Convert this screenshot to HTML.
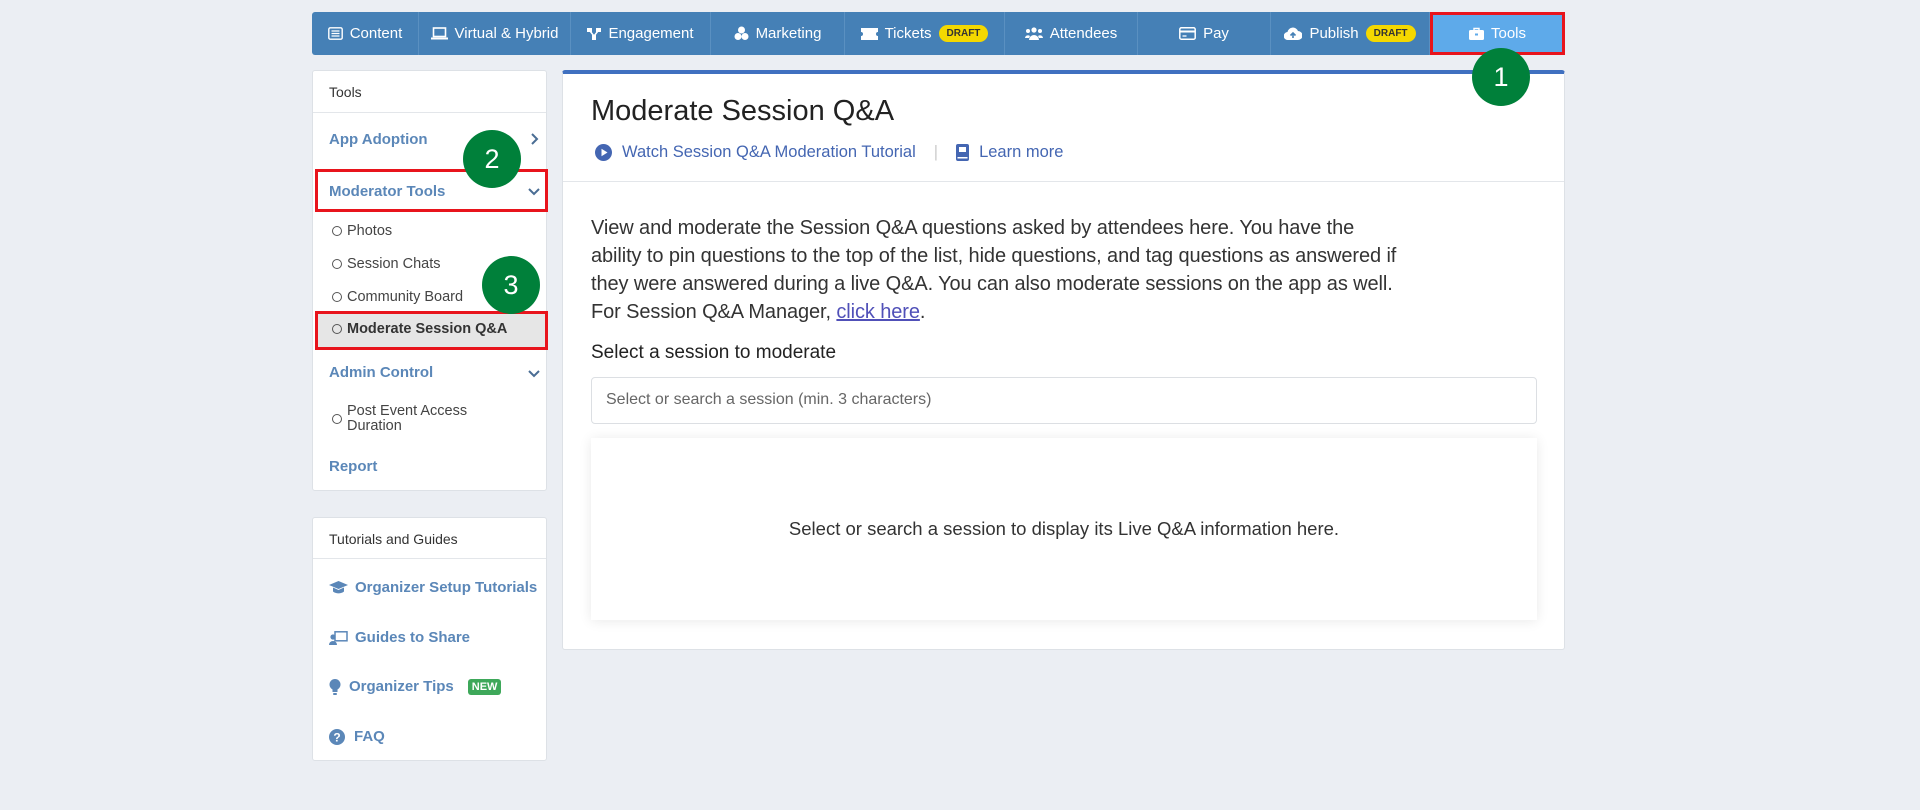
<!DOCTYPE html>
<html><head><meta charset="utf-8"><style>
*{box-sizing:border-box;margin:0;padding:0}
body{width:1920px;height:810px;background:#ebeef3;font-family:"Liberation Sans",Arial,sans-serif;position:relative;overflow:hidden;color:#333}
.abs{position:absolute}
.nav{left:312px;top:12px;width:1253px;height:43px;background:#4580b6;border-radius:3px;display:flex}
.nav div{height:43px;display:flex;align-items:center;justify-content:center;color:#fff;font-size:15px;border-right:1px solid #5a90c1;gap:7px}
.draft{background:#f4d800;color:#333;font-size:10px;font-weight:bold;padding:3px 8px;border-radius:9px}
.card{background:#fff;border:1px solid #dde1e6;border-radius:3px}
.sb{left:312px;width:235px}
.it{position:absolute;left:16px;font-size:15px;font-weight:bold;color:#5b87b8}
.sub{position:absolute;left:19px;font-size:14.5px;color:#444;display:flex;align-items:center;gap:5px}
.sub i{display:inline-block;width:10px;height:10px;border:1.3px solid #555;border-radius:50%}
.chev{position:absolute;right:5px}
.red{position:absolute;border:3px solid #e8141c}
.num{position:absolute;width:58px;height:58px;border-radius:50%;background:#00803a;color:#fff;font-size:27px;display:flex;align-items:center;justify-content:center}
.lnk{color:#4466b2;font-size:16.5px}
</style></head><body>
<div class="abs nav">
 <div style="width:107px"><svg width="15" height="13"><rect x=".8" y=".8" width="13.4" height="11.4" rx="1.5" fill="none" stroke="#fff" stroke-width="1.4"/><path d="M3.5 4h8M3.5 6.5h8M3.5 9h8" stroke="#fff" stroke-width="1.2"/></svg>Content</div>
 <div style="width:152px"><svg width="17" height="13"><rect x="2.5" y="1" width="12" height="8.5" fill="none" stroke="#fff" stroke-width="1.6"/><rect x="0" y="10.5" width="17" height="2" fill="#fff"/></svg>Virtual &amp; Hybrid</div>
 <div style="width:140px"><svg width="14" height="13"><rect x="0" y="1" width="5" height="4" fill="#fff"/><rect x="9" y="1" width="5" height="4" fill="#fff"/><rect x="5" y="8" width="4" height="5" fill="#fff"/><path d="M3 4l4 5M11 4l-4 5" stroke="#fff" stroke-width="1.5"/></svg>Engagement</div>
 <div style="width:134px"><svg width="15" height="15"><circle cx="7.5" cy="4" r="3.5" fill="#fff"/><circle cx="4" cy="10.5" r="3.5" fill="#fff"/><circle cx="11" cy="10.5" r="3.5" fill="#fff"/></svg>Marketing</div>
 <div style="width:160px"><svg width="17" height="12"><path d="M0 0h17v4a2 2 0 0 0 0 4v4H0V8a2 2 0 0 0 0-4z" fill="#fff"/></svg>Tickets<span class="draft">DRAFT</span></div>
 <div style="width:133px"><svg width="18" height="13"><circle cx="9" cy="3" r="2.6" fill="#fff"/><circle cx="3" cy="4" r="2" fill="#fff"/><circle cx="15" cy="4" r="2" fill="#fff"/><path d="M4 13a5 5 0 0 1 10 0zM0 11a3 3 0 0 1 5-2l-1 2zM18 11a3 3 0 0 0-5-2l1 2z" fill="#fff"/></svg>Attendees</div>
 <div style="width:133px"><svg width="17" height="13"><rect x=".8" y=".8" width="15.4" height="11.4" rx="1.5" fill="none" stroke="#fff" stroke-width="1.5"/><rect x="1" y="3.5" width="15" height="2" fill="#fff"/><path d="M3.5 9h4" stroke="#fff" stroke-width="1.3"/></svg>Pay</div>
 <div style="width:159px"><svg width="18" height="13"><path d="M4 13a4 4 0 0 1-.5-8A5.5 5.5 0 0 1 14 4a4.5 4.5 0 0 1 0 9z" fill="#fff"/><path d="M9 11V6M6.5 8.5L9 6l2.5 2.5" stroke="#4580b6" stroke-width="1.6" fill="none"/></svg>Publish<span class="draft">DRAFT</span></div>
 <div style="width:135px;background:#5eaaea;border:3px solid #e8141c"><svg width="15" height="13"><path d="M5 3V1.5h5V3" stroke="#fff" stroke-width="1.4" fill="none"/><rect x="0" y="3" width="15" height="10" rx="1.5" fill="#fff"/><rect x="6" y="6.5" width="3" height="2" fill="#5eaaea"/></svg>Tools</div>
</div>

<div class="abs card sb" style="top:70px;height:421px">
 <div style="position:absolute;left:16px;top:13px;font-size:14px;color:#333">Tools</div>
 <div style="position:absolute;left:0;right:0;top:41px;border-top:1px solid #e3e6ea"></div>
 <div class="it" style="top:60px">App Adoption</div><svg class="chev" style="top:61px;right:7px" width="9" height="14"><path d="M2 2l5 5-5 5" stroke="#4a6d94" stroke-width="2" fill="none"/></svg>
 <div class="it" style="top:112px">Moderator Tools</div><svg class="chev" style="top:116px" width="14" height="9"><path d="M2 2l5 5 5-5" stroke="#4a6d94" stroke-width="2" fill="none"/></svg>
 <div class="sub" style="top:152px"><i></i>Photos</div>
 <div class="sub" style="top:185px"><i></i>Session Chats</div>
 <div class="sub" style="top:218px"><i></i>Community Board</div>
 <div style="position:absolute;left:3px;top:242px;width:231px;height:36px;background:#e6e6e6"></div>
 <div class="sub" style="top:250px;font-weight:bold;color:#333"><i></i>Moderate Session Q&amp;A</div>
 <div class="it" style="top:293px">Admin Control</div><svg class="chev" style="top:298px" width="14" height="9"><path d="M2 2l5 5 5-5" stroke="#4a6d94" stroke-width="2" fill="none"/></svg>
 <div class="sub" style="top:333px;line-height:15px"><i></i><span>Post Event Access<br>Duration</span></div>
 <div class="it" style="top:387px">Report</div>
</div>
<div class="red" style="left:315px;top:169px;width:233px;height:43px"></div>
<div class="red" style="left:315px;top:311px;width:233px;height:39px"></div>

<div class="abs card sb" style="top:517px;height:244px">
 <div style="position:absolute;left:16px;top:13px;font-size:14px;color:#333">Tutorials and Guides</div>
 <div style="position:absolute;left:0;right:0;top:40px;border-top:1px solid #e3e6ea"></div>
 <div class="it" style="top:61px;display:flex;gap:7px;align-items:center"><svg width="19" height="13"><path d="M9.5 0L19 4l-9.5 4L0 4z" fill="#5b87b8"/><path d="M4 6.5v4c3 2.5 8 2.5 11 0v-4l-5.5 2.5z" fill="#5b87b8"/></svg>Organizer Setup Tutorials</div>
 <div class="it" style="top:111px;display:flex;gap:7px;align-items:center"><svg width="19" height="14"><rect x="6" y="0.8" width="12" height="9" fill="none" stroke="#5b87b8" stroke-width="1.5"/><circle cx="4" cy="6" r="2.6" fill="#5b87b8"/><path d="M0 14a4 4 0 0 1 8 0z" fill="#5b87b8"/></svg>Guides to Share</div>
 <div class="it" style="top:160px;display:flex;gap:8px;align-items:center"><svg width="12" height="16"><circle cx="6" cy="5.5" r="5.5" fill="#5b87b8"/><rect x="3.5" y="9" width="5" height="4" fill="#5b87b8"/><rect x="4" y="14" width="4" height="2" rx="1" fill="#5b87b8"/></svg>Organizer Tips <span style="background:#3ea85a;color:#fff;font-size:11px;padding:2px 4px;border-radius:3px;margin-left:6px">NEW</span></div>
 <div class="it" style="top:210px;display:flex;gap:9px;align-items:center"><svg width="16" height="16"><circle cx="8" cy="8" r="8" fill="#5b87b8"/><text x="8" y="12.5" text-anchor="middle" fill="#fff" font-size="12" font-weight="bold" font-family="Liberation Sans">?</text></svg>FAQ</div>
</div>

<div class="abs card" style="left:562px;top:70px;width:1003px;height:580px;border-top:4px solid #4070c0">
 <div style="position:absolute;left:28px;top:21px;font-size:29px;color:#222">Moderate Session Q&amp;A</div>
 <div style="position:absolute;left:32px;top:69px;display:flex;align-items:center;gap:10px" class="lnk">
  <svg width="17" height="17"><circle cx="8.5" cy="8.5" r="8.5" fill="#4466b2"/><path d="M6.5 4.8v7.4l6-3.7z" fill="#fff"/></svg>Watch Session Q&amp;A Moderation Tutorial
  <span style="color:#ccc;margin:0 8px">|</span>
  <svg width="13" height="17"><rect width="13" height="17" rx="2" fill="#4466b2"/><rect x="3" y="3" width="7" height="5" fill="#fff"/><rect x="1.5" y="13" width="10" height="1.5" fill="#fff"/></svg>Learn more</div>
 <div style="position:absolute;left:0;right:0;top:107px;border-top:1px solid #e3e6ea"></div>
 <div style="position:absolute;left:28px;top:140px;font-size:20px;line-height:28px;color:#333;white-space:nowrap;letter-spacing:-0.1px">View and moderate the Session Q&amp;A questions asked by attendees here. You have the<br>ability to pin questions to the top of the list, hide questions, and tag questions as answered if<br>they were answered during a live Q&amp;A. You can also moderate sessions on the app as well.<br>For Session Q&amp;A Manager, <span style="color:#5050b8;text-decoration:underline">click here</span>.</div>
 <div style="position:absolute;left:28px;top:268px;font-size:19px;color:#222">Select a session to moderate</div>
 <div style="position:absolute;left:28px;top:303px;width:946px;height:47px;border:1px solid #dcdfe3;border-radius:4px;font-size:16px;color:#666;padding:13px 14px">Select or search a session (min. 3 characters)</div>
 <div style="position:absolute;left:28px;top:364px;width:946px;height:182px;background:#fff;box-shadow:0 1px 12px rgba(0,0,0,.09);display:flex;align-items:center;justify-content:center;font-size:18.5px;color:#333">Select or search a session to display its Live Q&amp;A information here.</div>
</div>

<div class="num" style="left:1472px;top:48px">1</div>
<div class="num" style="left:463px;top:130px">2</div>
<div class="num" style="left:482px;top:256px">3</div>
</body></html>
